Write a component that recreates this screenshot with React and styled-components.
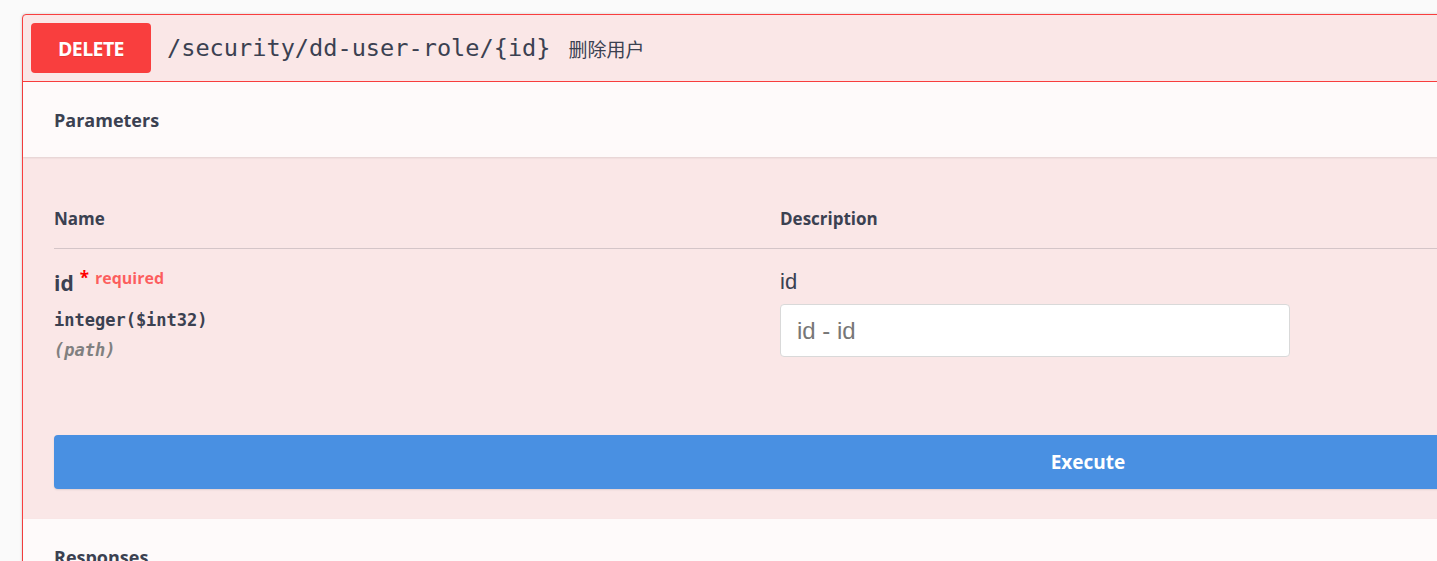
import React from "react";
import styled, { createGlobalStyle } from "styled-components";

const Global = createGlobalStyle`
  html, body { margin: 0; padding: 0; background: #fafafa; overflow: hidden; }
  body { font-family: "Open Sans", "Noto Sans", sans-serif; color: #3b4151; }
`;

const Page = styled.div`
  padding: 14px 0 0 22px;
  width: 2300px;
`;

const OpBlock = styled.div`
  width: 2130px;
  border: 1px solid #f93e3e;
  border-radius: 4px;
  background: #fae7e7;
  box-shadow: 0 0 3px rgba(0,0,0,.19);
`;

const Summary = styled.div`
  display: flex;
  align-items: center;
  height: 67px;
  padding: 0 8px;
  border-bottom: 1px solid #f93e3e;
  box-sizing: border-box;
`;

const Method = styled.span`
  display: flex;
  align-items: center;
  justify-content: center;
  width: 120px;
  height: 50px;
  border-radius: 4px;
  background: #f93e3e;
  color: #fff;
  font-weight: 700;
  font-size: 19.5px;
  letter-spacing: -0.6px;
  text-shadow: 0 1px 0 rgba(0,0,0,.1);
`;

const Path = styled.span`
  margin-left: 16px;
  font-family: "DejaVu Sans Mono", "Liberation Mono", monospace;
  font-size: 23.6px;
  color: #3b4151;
`;

const Desc = styled.span`
  margin-left: 18px;
  font-family: "Noto Sans CJK SC", sans-serif;
  font-size: 19px;
  color: #3b4151;
`;

const SectionHeader = styled.div`
  display: flex;
  align-items: center;
  height: 75px;
  padding: 0 31px;
  background: rgba(255,255,255,.8);
  box-shadow: 0 1px 2px rgba(0,0,0,.1);
`;

const SectionTitle = styled.h4`
  margin: 0;
  font-size: 18px;
  font-weight: 700;
  color: #3b4151;
`;

const Body = styled.div`
  padding: 42px 31px 30px;
`;

const Table = styled.div`
  display: grid;
  grid-template-columns: 726px 1fr;
  align-items: start;
`;

const HeadCell = styled.div`
  font-size: 17px;
  font-weight: 700;
  color: #3b4151;
  padding: 8px 0 18px;
  border-bottom: 1px solid rgba(59,65,81,.2);
`;

const Cell = styled.div`
  padding-top: 18px;
`;

const ParamName = styled.div`
  display: flex;
  align-items: flex-start;
  font-size: 21px;
  font-weight: 700;
  color: #3b4151;
  line-height: 32px;
`;

const Required = styled.span`
  margin-left: 6px;
  color: red;
  font-size: 17px;
  line-height: 22px;
`;

const RequiredText = styled.span`
  margin-left: 6px;
  color: rgba(255,0,0,.6);
  font-size: 16px;
  line-height: 22px;
`;

const ParamType = styled.div`
  margin-top: 10px;
  font-family: "DejaVu Sans Mono", "Liberation Mono", monospace;
  font-size: 17px;
  line-height: 22px;
  font-weight: 600;
  color: #3b4151;
`;

const ParamIn = styled.div`
  margin-top: 8px;
  font-family: "DejaVu Sans Mono", "Liberation Mono", monospace;
  font-size: 17px;
  line-height: 22px;
  font-style: italic;
  font-weight: 600;
  color: gray;
`;

const DescText = styled.div`
  font-size: 22px;
  color: #3b4151;
  line-height: 30px;
  font-family: "Liberation Sans", Arial, sans-serif;
`;

const Input = styled.input`
  display: block;
  margin-top: 7px;
  width: 510px;
  height: 53px;
  box-sizing: border-box;
  padding: 0 16px;
  border: 1px solid #d9d9d9;
  border-radius: 4px;
  background: #fff;
  font-family: "Liberation Sans", Arial, sans-serif;
  font-size: 24px;
  outline: none;
  &::placeholder { color: #777; }
`;

const Execute = styled.button`
  display: block;
  width: 100%;
  height: 54px;
  margin-top: 74px;
  border: none;
  border-radius: 4px;
  background: #4990e2;
  color: #fff;
  font-family: "Open Sans", sans-serif;
  font-size: 19px;
  font-weight: 700;
  box-shadow: 0 1px 2px rgba(0,0,0,.1);
`;

export default function App() {
  return (
    <>
      <Global />
      <Page>
        <OpBlock>
          <Summary>
            <Method>DELETE</Method>
            <Path>/security/dd-user-role/&#123;id&#125;</Path>
            <Desc>删除用户</Desc>
          </Summary>
          <SectionHeader>
            <SectionTitle>Parameters</SectionTitle>
          </SectionHeader>
          <Body>
            <Table>
              <HeadCell>Name</HeadCell>
              <HeadCell>Description</HeadCell>
              <Cell>
                <ParamName>
                  id<Required>*</Required><RequiredText>required</RequiredText>
                </ParamName>
                <ParamType>integer($int32)</ParamType>
                <ParamIn>(path)</ParamIn>
              </Cell>
              <Cell>
                <DescText>id</DescText>
                <Input placeholder="id - id" />
              </Cell>
            </Table>
            <Execute>Execute</Execute>
          </Body>
          <SectionHeader>
            <SectionTitle>Responses</SectionTitle>
          </SectionHeader>
        </OpBlock>
      </Page>
    </>
  );
}
